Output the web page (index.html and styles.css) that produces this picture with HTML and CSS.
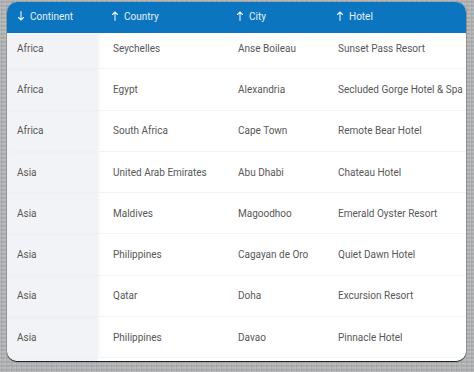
FILE: index.html
```html
<!DOCTYPE html>
<html>
<head>
<meta charset="utf-8">
<link rel="stylesheet" href="styles.css">
</head>
<body>
<div class="card">
  <div class="thead">
    <div class="th c1"><svg class="arr" viewBox="0 0 8 10"><path d="M4 0.5V9M1.5 6.5L4 9l2.5-2.5"/></svg>Continent</div>
    <div class="th c2"><svg class="arr" viewBox="0 0 8 10"><path d="M4 9.5V1M1.5 3.5L4 1l2.5 2.5"/></svg>Country</div>
    <div class="th c3"><svg class="arr" viewBox="0 0 8 10"><path d="M4 9.5V1M1.5 3.5L4 1l2.5 2.5"/></svg>City</div>
    <div class="th c4"><svg class="arr" viewBox="0 0 8 10"><path d="M4 9.5V1M1.5 3.5L4 1l2.5 2.5"/></svg>Hotel</div>
  </div>
  <div class="tbody">
    <div class="tr"><div class="td c1">Africa</div><div class="td c2">Seychelles</div><div class="td c3">Anse Boileau</div><div class="td c4">Sunset Pass Resort</div></div>
    <div class="tr"><div class="td c1">Africa</div><div class="td c2">Egypt</div><div class="td c3">Alexandria</div><div class="td c4">Secluded Gorge Hotel &amp; Spa</div></div>
    <div class="tr"><div class="td c1">Africa</div><div class="td c2">South Africa</div><div class="td c3">Cape Town</div><div class="td c4">Remote Bear Hotel</div></div>
    <div class="tr"><div class="td c1">Asia</div><div class="td c2">United Arab Emirates</div><div class="td c3">Abu Dhabi</div><div class="td c4">Chateau Hotel</div></div>
    <div class="tr"><div class="td c1">Asia</div><div class="td c2">Maldives</div><div class="td c3">Magoodhoo</div><div class="td c4">Emerald Oyster Resort</div></div>
    <div class="tr"><div class="td c1">Asia</div><div class="td c2">Philippines</div><div class="td c3">Cagayan de Oro</div><div class="td c4">Quiet Dawn Hotel</div></div>
    <div class="tr"><div class="td c1">Asia</div><div class="td c2">Qatar</div><div class="td c3">Doha</div><div class="td c4">Excursion Resort</div></div>
    <div class="tr"><div class="td c1">Asia</div><div class="td c2">Philippines</div><div class="td c3">Davao</div><div class="td c4">Pinnacle Hotel</div></div>
  </div>
</div>
</body>
</html>
```
FILE: styles.css
```css
html, body {
  margin: 0;
  padding: 0;
}
body {
  width: 474px;
  height: 372px;
  box-sizing: border-box;
  padding: 2px 8px 0 7px;
  background-color: #b4b6b7;
  background-image:
    repeating-linear-gradient(90deg, rgba(255,255,255,0.08) 0 1px, rgba(0,0,0,0.05) 1px 2px, transparent 2px 5px),
    repeating-linear-gradient(0deg, rgba(255,255,255,0.07) 0 1px, rgba(0,0,0,0.06) 1px 3px, transparent 3px 4px);
  font-family: Roboto, "Liberation Sans", sans-serif;
  overflow: hidden;
}
.card {
  width: 459px;
  height: 359px;
  border-radius: 10px;
  overflow: hidden;
  background: linear-gradient(to right, #f2f3f6 91px, #ffffff 91px);
  box-shadow: 0 1px 1px rgba(0,0,0,0.85), 0 0 1px rgba(0,0,0,0.5);
  display: flex;
  flex-direction: column;
}
.thead {
  position: relative;
  z-index: 2;
  display: flex;
  height: 31px;
  flex: none;
  box-sizing: border-box;
  padding-bottom: 3px;
  background: #0b76bf;
  color: #e6f0f9;
  font-size: 10px;
  font-weight: 400;
}
.th {
  display: flex;
  align-items: center;
  box-sizing: border-box;
}
.arr {
  width: 8px;
  height: 10px;
  margin-right: 5px;
  fill: none;
  stroke: #e6f0f9;
  stroke-width: 1.1;
  stroke-linecap: round;
  stroke-linejoin: round;
}
.c1 { width: 91px; padding-left: 10px; }
.c2 { width: 125px; padding-left: 13px; }
.c3 { width: 100px; padding-left: 13px; }
.c4 { flex: 1; padding-left: 13px; }
.tbody {
  margin-top: -5px;
  position: relative;
  z-index: 1;
}
.tr {
  display: flex;
  height: 41.3px;
  font-size: 10px;
  color: #585858;
}
.td {
  display: flex;
  align-items: center;
  box-sizing: border-box;
  white-space: nowrap;
  border-bottom: 1px solid #f2f3f5;
}
.td.c1 {
  padding-left: 10px;
  border-bottom-color: transparent;
  box-shadow: 2px 0 3px rgba(0,0,0,0.03);
}
.td.c2, .td.c3, .td.c4 { padding-left: 15px; }
```
